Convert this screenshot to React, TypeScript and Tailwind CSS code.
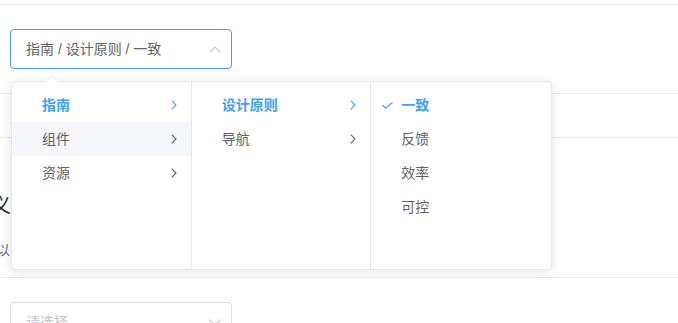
import React from "react";

const font = { fontFamily: '"Liberation Sans", "Noto Sans CJK SC", sans-serif' };

function ChevronRight({ className }: { className?: string }) {
  return (
    <svg className={className} width="6" height="10" viewBox="0 0 6 10" fill="none">
      <path d="M0.8 0.6 L5 5 L0.8 9.4" stroke="currentColor" strokeWidth="1.1" />
    </svg>
  );
}

function Chevron({ up }: { up?: boolean }) {
  return (
    <svg width="12" height="7" viewBox="0 0 12 7" fill="none" className="text-[#c0c4cc]">
      {up ? (
        <path d="M0.6 6.4 L6 1 L11.4 6.4" stroke="currentColor" strokeWidth="1.1" />
      ) : (
        <path d="M0.6 0.6 L6 6 L11.4 0.6" stroke="currentColor" strokeWidth="1.1" />
      )}
    </svg>
  );
}

type Node = { label: string; active?: boolean; hover?: boolean; arrow?: boolean; checked?: boolean };

function Menu({ nodes, last }: { nodes: Node[]; last?: boolean }) {
  return (
    <div className={`w-[180px] h-full py-[6px] ${last ? "" : "border-r border-[#e4e7ed]"}`}>
      {nodes.map((n) => (
        <div
          key={n.label}
          className={`relative h-[34px] leading-[34px] pl-[20px] pr-[30px] text-[14px] ${
            n.hover ? "bg-[#f5f7fa]" : ""
          } ${n.active ? "text-[#409eff] font-bold" : "text-[#606266]"}`}
        >
          {n.checked && (
            <svg className="absolute left-[11px] top-[14px] text-[#409eff]" width="11" height="7" viewBox="0 0 11 7" fill="none">
              <path d="M0.5 3 L3.5 6.2 L10.5 0.5" stroke="currentColor" strokeWidth="1.1" />
            </svg>
          )}
          <span className="px-[10px]">{n.label}</span>
          {n.arrow && (
            <ChevronRight
              className={`absolute right-[14px] top-[12px] ${n.active ? "text-[#409eff]" : "text-[#606266]"}`}
            />
          )}
        </div>
      ))}
    </div>
  );
}

export default function App() {
  return (
    <div className="relative w-[678px] h-[323px] overflow-hidden bg-white" style={font}>
      <div className="h-[4px]" />
      <div className="border-t border-[#ebebeb] pt-[24px] pb-[24px] pl-[10px]">
        <div className="w-[222px] h-[40px] rounded-[4px] border border-[#409eff] flex items-center justify-between pl-[15px] pr-[10px]">
          <span className="text-[14px] text-[#606266]">指南 / 设计原则 / 一致</span>
          <Chevron up />
        </div>
      </div>
      <div className="border-t border-[#ebebeb] h-[44px]" />
      <div className="border-t border-[#ebebeb] pt-[54px] pb-[16px]">
        <div className="-ml-[9px] text-[20px] leading-[28px] text-[#1f2f3d] whitespace-nowrap">义：</div>
        <div className="mt-[19px] -ml-[4px] text-[14px] leading-[22px] text-[#5e6d82] whitespace-nowrap">以</div>
      </div>
      <div className="border-t border-[#ebebeb] pt-[24px] pl-[10px]">
        <div className="w-[222px] h-[40px] rounded-[4px] border border-[#dcdfe6] flex items-center justify-between pl-[15px] pr-[10px]">
          <span className="text-[14px] text-[#c0c4cc]">请选择</span>
          <Chevron />
        </div>
      </div>

      {/* dropdown */}
      <div className="absolute left-[11px] top-[81px] w-[541px] h-[189px] bg-white border border-[#e4e7ed] rounded-[4px] shadow-[0_2px_12px_0_rgba(0,0,0,0.1)] flex">
        <svg className="absolute left-[33px] -top-[7px]" width="14" height="8" viewBox="0 0 14 8">
          <path d="M0 7.5 L7 0.8 L14 7.5" fill="white" stroke="#e4e7ed" strokeWidth="1" />
          <rect x="0" y="7" width="14" height="1.5" fill="white" />
        </svg>
        <Menu
          nodes={[
            { label: "指南", active: true, arrow: true },
            { label: "组件", hover: true, arrow: true },
            { label: "资源", arrow: true },
          ]}
        />
        <Menu
          nodes={[
            { label: "设计原则", active: true, arrow: true },
            { label: "导航", arrow: true },
          ]}
        />
        <Menu
          last
          nodes={[
            { label: "一致", active: true, checked: true },
            { label: "反馈" },
            { label: "效率" },
            { label: "可控" },
          ]}
        />
      </div>
    </div>
  );
}
